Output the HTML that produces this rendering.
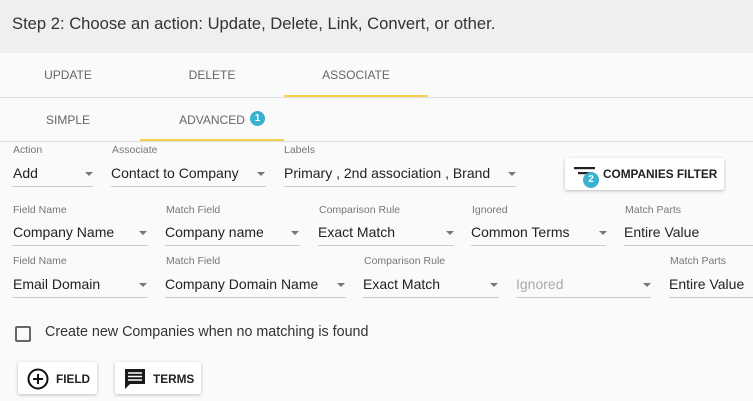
<!DOCTYPE html>
<html><head><style>
*{box-sizing:border-box;margin:0;padding:0}
body{width:753px;height:401px;overflow:hidden;background:#fafafa;font-family:"Liberation Sans",sans-serif;position:relative;color:#222}
.a{position:absolute;white-space:nowrap}
.hdr{left:0;top:0;width:753px;height:53px;background:#eeeff1}
.tab{font-size:12px;color:#666;text-align:center;width:144px}
.lab{font-size:10.5px;color:#777}
.val{font-size:14px;color:#222}
.ul{height:1px;background:#ccc}
.car{width:0;height:0;border-left:4px solid transparent;border-right:4px solid transparent;border-top:4px solid #777}
.btn{background:#fff;box-shadow:0 1px 3px rgba(0,0,0,.25);border-radius:2px;font-size:11.8px;font-weight:bold;color:#222}
.badge{width:15px;height:15px;border-radius:50%;background:#3bb1d0;color:#fff;font-size:10px;font-weight:bold;text-align:center;line-height:15px}
</style></head><body>
<div class="a hdr"></div>
<div class="a" style="left:12px;top:14px;font-size:16.6px;color:#333">Step 2: Choose an action: Update, Delete, Link, Convert, or other.</div>
<div class="a tab" style="left:-4px;top:68px">UPDATE</div>
<div class="a tab" style="left:140px;top:68px">DELETE</div>
<div class="a tab" style="left:284px;top:68px">ASSOCIATE</div>
<div class="a" style="left:284px;top:95px;width:144px;height:2px;background:#f2d04a"></div>
<div class="a" style="left:0;top:97px;width:753px;height:1px;background:#e0e0e0"></div>
<div class="a tab" style="left:-4px;top:113px">SIMPLE</div>
<div class="a tab" style="left:140px;top:113px">ADVANCED</div>
<div class="a badge" style="left:250px;top:111px">1</div>
<div class="a" style="left:140px;top:139px;width:144px;height:2px;background:#f2d04a"></div>
<div class="a" style="left:0;top:141px;width:753px;height:1px;background:#e0e0e0"></div>

<!-- row 3 -->
<div class="a lab" style="left:13px;top:144px">Action</div>
<div class="a val" style="left:13px;top:165px">Add</div>
<div class="a car" style="left:85px;top:172px"></div>
<div class="a ul" style="left:12px;top:186px;width:81px"></div>
<div class="a lab" style="left:112px;top:144px">Associate</div>
<div class="a val" style="left:111px;top:165px">Contact to Company</div>
<div class="a car" style="left:257px;top:172px"></div>
<div class="a ul" style="left:111px;top:186px;width:155px"></div>
<div class="a lab" style="left:284px;top:144px">Labels</div>
<div class="a val" style="left:284px;top:165px">Primary , 2nd association , Brand</div>
<div class="a car" style="left:508px;top:172px"></div>
<div class="a ul" style="left:284px;top:186px;width:232px"></div>
<div class="a btn" style="left:565px;top:158px;width:159px;height:32px">
<svg class="a" style="left:9px;top:9px" width="22" height="14" viewBox="0 0 22 14"><rect x="0" y="0" width="21" height="2.2" fill="#222"/><rect x="4" y="5" width="13" height="2.2" fill="#222"/></svg>
<div class="a badge" style="left:18px;top:14px;width:16px;height:16px;line-height:16px">2</div>
<div class="a" style="left:38px;top:9px">COMPANIES FILTER</div></div>

<!-- row 4 -->
<div class="a lab" style="left:13px;top:204px">Field Name</div>
<div class="a val" style="left:13px;top:224px">Company Name</div>
<div class="a car" style="left:139px;top:231px"></div>
<div class="a ul" style="left:12px;top:245px;width:136px"></div>
<div class="a lab" style="left:166px;top:204px">Match Field</div>
<div class="a val" style="left:165px;top:224px">Company name</div>
<div class="a car" style="left:291px;top:231px"></div>
<div class="a ul" style="left:165px;top:245px;width:135px"></div>
<div class="a lab" style="left:319px;top:204px">Comparison Rule</div>
<div class="a val" style="left:318px;top:224px">Exact Match</div>
<div class="a car" style="left:446px;top:231px"></div>
<div class="a ul" style="left:318px;top:245px;width:136px"></div>
<div class="a lab" style="left:472px;top:204px">Ignored</div>
<div class="a val" style="left:471px;top:224px">Common Terms</div>
<div class="a car" style="left:599px;top:231px"></div>
<div class="a ul" style="left:471px;top:245px;width:135px"></div>
<div class="a lab" style="left:625px;top:204px">Match Parts</div>
<div class="a val" style="left:624px;top:224px">Entire Value</div>
<div class="a ul" style="left:624px;top:245px;width:129px"></div>

<!-- row 5 -->
<div class="a lab" style="left:13px;top:255px">Field Name</div>
<div class="a val" style="left:13px;top:276px">Email Domain</div>
<div class="a car" style="left:139px;top:283px"></div>
<div class="a ul" style="left:12px;top:297px;width:136px"></div>
<div class="a lab" style="left:166px;top:255px">Match Field</div>
<div class="a val" style="left:165px;top:276px">Company Domain Name</div>
<div class="a car" style="left:337px;top:283px"></div>
<div class="a ul" style="left:165px;top:297px;width:181px"></div>
<div class="a lab" style="left:364px;top:255px">Comparison Rule</div>
<div class="a val" style="left:363px;top:276px">Exact Match</div>
<div class="a car" style="left:490px;top:283px"></div>
<div class="a ul" style="left:363px;top:297px;width:136px"></div>
<div class="a val" style="left:516px;top:276px;color:#aaa">Ignored</div>
<div class="a car" style="left:643px;top:283px"></div>
<div class="a ul" style="left:516px;top:297px;width:135px"></div>
<div class="a lab" style="left:670px;top:255px">Match Parts</div>
<div class="a val" style="left:669px;top:276px">Entire Value</div>
<div class="a ul" style="left:669px;top:297px;width:84px"></div>

<div class="a" style="left:15px;top:326px;width:16px;height:16px;border:2px solid #666;border-radius:2px"></div>
<div class="a" style="left:45px;top:324px;font-size:14.3px;color:#333">Create new Companies when no matching is found</div>

<div class="a btn" style="left:18px;top:362px;width:79px;height:32px">
<svg class="a" style="left:9px;top:6px" width="22" height="22" viewBox="0 0 22 22"><circle cx="11" cy="11" r="9.5" fill="none" stroke="#111" stroke-width="2"/><path d="M11 6v10M6 11h10" stroke="#111" stroke-width="2"/></svg>
<div class="a" style="left:38px;top:10px">FIELD</div></div>
<div class="a btn" style="left:115px;top:362px;width:86px;height:32px">
<svg class="a" style="left:9px;top:6px" width="22" height="22" viewBox="0 0 22 22"><path d="M1 1h20v15H6l-5 5z" fill="#1a1a1a"/><path d="M4 5h14M4 8.5h14M4 12h14" stroke="#fff" stroke-width="1.6"/></svg>
<div class="a" style="left:38px;top:10px">TERMS</div></div>
</body></html>
